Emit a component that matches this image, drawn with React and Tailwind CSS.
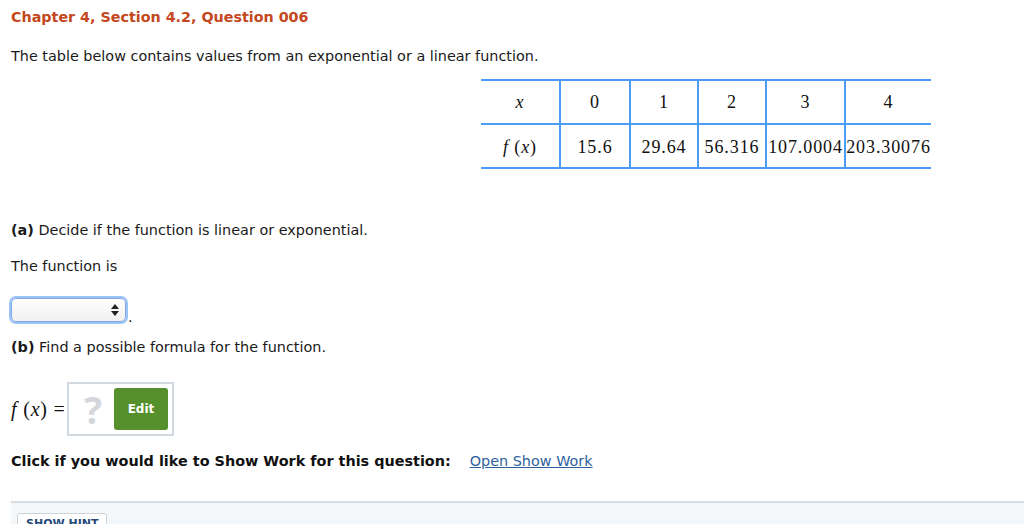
import React from "react";

const cols = [
  { w: "w-[78px]", h: "x", v: "f (x)" },
  { w: "w-[70px]", h: "0", v: "15.6" },
  { w: "w-[68px]", h: "1", v: "29.64" },
  { w: "w-[68px]", h: "2", v: "56.316" },
  { w: "w-[79px]", h: "3", v: "107.0004" },
  { w: "w-[87px]", h: "4", v: "203.30076" },
];

function Table() {
  return (
    <div className="ml-[470px] mt-[15px] w-[450px] border-y-2 border-[#4a9cf6] font-['Liberation_Serif',serif] text-[18px] text-[#111] tracking-[0.05em]">
      <div className="flex h-[44px] border-b-2 border-[#4a9cf6]">
        {cols.map((c, i) => (
          <div
            key={i}
            className={`${c.w} flex items-center justify-center ${i > 0 ? "border-l-2 border-[#4a9cf6]" : ""}`}
          >
            {i === 0 ? <i>x</i> : c.h}
          </div>
        ))}
      </div>
      <div className="flex h-[42px] pt-[3px]">
        {cols.map((c, i) => (
          <div
            key={i}
            className={`${c.w} flex items-center justify-center whitespace-nowrap ${i > 0 ? "border-l-2 border-[#4a9cf6] -mt-[3px] pt-[3px]" : ""}`}
          >
            {i === 0 ? (
              <span>
                <i>f</i> (<i>x</i>)
              </span>
            ) : (
              c.v
            )}
          </div>
        ))}
      </div>
    </div>
  );
}

export default function App() {
  return (
    <div className="w-[1024px] h-[524px] overflow-hidden bg-white font-['DejaVu_Sans',sans-serif] text-[14.4px] text-[#1a1a1a]">
      <div className="pl-[11px]">
        <div className="pt-[9px] leading-[17px] text-[14.3px] font-bold text-[#c4471d]">
          Chapter 4, Section 4.2, Question 006
        </div>
        <div className="mt-[22px] leading-[16px]">
          The table below contains values from an exponential or a linear function.
        </div>
        <Table />
        <div className="mt-[53px] leading-[16px]">
          <b>(a)</b> Decide if the function is linear or exponential.
        </div>
        <div className="mt-[20px] leading-[16px]">The function is</div>
        <div className="mt-[24px] flex items-end h-[24px]">
          <div className="w-[115px] h-[24px] rounded-[5px] border border-[#7fa9e6] shadow-[0_0_0_2px_#9cc3f5] bg-gradient-to-b from-white to-[#f0f0f0] flex items-center justify-end pr-[6px]">
            <svg width="8" height="12" viewBox="0 0 8 12">
              <path d="M4 0 L8 5 L0 5 Z" fill="#222" />
              <path d="M4 12 L8 7 L0 7 Z" fill="#222" />
            </svg>
          </div>
          <span className="ml-[2px] leading-[10px]">.</span>
        </div>
        <div className="mt-[17px] leading-[16px]">
          <b>(b)</b> Find a possible formula for the function.
        </div>
        <div className="mt-[27px] flex items-center">
          <span className="font-['Liberation_Serif',serif] text-[20px] text-[#111] w-[56px] tracking-[0.04em] whitespace-nowrap">
            <i>f</i> (<i>x</i>) =
          </span>
          <div className="w-[107px] h-[54px] border-2 border-[#d2d9e0] flex items-center pl-[15px]">
            <span className="text-[38px] font-bold text-[#d3d7dc] leading-none font-['Open_Sans',sans-serif] w-[30px]">
              ?
            </span>
            <div className="w-[54px] h-[42px] rounded-[3px] bg-[#55902d] flex items-center justify-center text-white text-[12px] font-bold">
              Edit
            </div>
          </div>
        </div>
        <div className="mt-[17px] leading-[16px] flex">
          <b className="text-[#111]">Click if you would like to Show Work for this question:</b>
          <a className="ml-[19px] text-[#2e5f9c] underline">Open Show Work</a>
        </div>
        <div className="mt-[32px] h-[60px] border-t-2 border-[#d9dee4] bg-[#f3f7fa] pt-[9px] pl-[6px]">
          <div className="inline-block rounded-[3px] border border-[#cdd3da] bg-white px-[8px] py-[2px] text-[11px] font-bold text-[#24497a]">
            SHOW HINT
          </div>
        </div>
      </div>
    </div>
  );
}
